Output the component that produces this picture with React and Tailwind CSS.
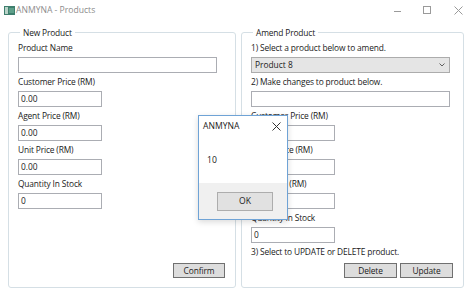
// App.jsx
const font = "font-['Segoe_UI','Open_Sans',sans-serif]";

function Label({ children }) {
  return (
    <div className="h-[18px] leading-[18px] text-[8.4px] tracking-[-0.15px] text-[#1a1a1a] whitespace-nowrap">
      {children}
    </div>
  );
}

function TextBox({ value = "", wide }) {
  return (
    <div
      className={`h-[16px] ${wide ? "w-[199px]" : "w-[84px]"} border border-[#abadb3] bg-white px-[2px] text-[8.4px] leading-[14px] text-[#1a1a1a]`}
    >
      {value}
    </div>
  );
}

function Button({ children, w = "w-[53px]" }) {
  return (
    <button className={`${w} h-[15px] border border-[#707070] bg-[#dddddd] text-[8.4px] tracking-[-0.1px] leading-[13px] text-[#1a1a1a]`}>
      {children}
    </button>
  );
}

function GroupBox({ title, width, children }) {
  return (
    <fieldset className={`${width} h-[262px] flex flex-col border border-[#d5dfe5] rounded-[3px] pl-[9px] pr-[10px] pb-[9px]`}>
      <legend className="ml-[2px] px-[3px] text-[8.4px] tracking-[-0.15px] leading-[13px] text-[#1a1a1a]">{title}</legend>
      {children}
    </fieldset>
  );
}

export default function App() {
  return (
    <div className={`w-[474px] h-[295px] bg-white relative overflow-hidden ${font}`}>
      {/* title bar */}
      <div className="h-[20px] flex items-center">
        <svg width="11" height="9" viewBox="0 0 11 9" className="ml-[4px] mr-[1px]">
          <rect x="0" y="0" width="11" height="9" fill="#3f7f6e" />
          <rect x="1" y="1" width="3" height="7" fill="#b9d3c8" />
          <rect x="5" y="2" width="5" height="5" fill="#5ea08a" />
        </svg>
        <span className="text-[8.6px] text-[#8c8c8c]">ANMYNA - Products</span>
        <div className="ml-auto flex items-center h-full">
          <div className="w-[30px] flex justify-center">
            <div className="w-[7px] h-px bg-[#9a9a9a] mt-[2px]" />
          </div>
          <div className="w-[30px] flex justify-center">
            <div className="w-[8px] h-[8px] border border-[#9a9a9a]" />
          </div>
          <div className="w-[32px] flex justify-center">
            <svg width="9" height="9" viewBox="0 0 9 9">
              <path d="M0.5 0.5L8.5 8.5M8.5 0.5L0.5 8.5" stroke="#9a9a9a" strokeWidth="1" />
            </svg>
          </div>
        </div>
      </div>

      {/* groups */}
      <div className="flex gap-[5px] pl-[8px] mt-[6px]">
        <GroupBox title="New Product" width="w-[228px]">
          <Label>Product Name</Label>
          <TextBox wide />
          <Label>Customer Price (RM)</Label>
          <TextBox value="0.00" />
          <Label>Agent Price (RM)</Label>
          <TextBox value="0.00" />
          <Label>Unit Price (RM)</Label>
          <TextBox value="0.00" />
          <Label>Quantity In Stock</Label>
          <TextBox value="0" />
          <div className="flex-1" />
          <div className="flex justify-end">
            <Button w="w-[52px]">Confirm</Button>
          </div>
        </GroupBox>

        <GroupBox title="Amend Product" width="w-[223px]">
          <Label>1) Select a product below to amend.</Label>
          <div className="h-[16px] w-[199px] border border-[#acacac] bg-[#e5e5e5] flex items-center pl-[3px] pr-[4px] text-[8.4px] text-[#1a1a1a]">
            <span>Product 8</span>
            <svg width="6" height="4" viewBox="0 0 6 4" className="ml-auto">
              <path d="M0.5 0.5L3 3L5.5 0.5" fill="none" stroke="#606060" strokeWidth="1" />
            </svg>
          </div>
          <Label>2) Make changes to product below.</Label>
          <TextBox wide />
          <Label>Customer Price (RM)</Label>
          <TextBox />
          <Label>Agent Price (RM)</Label>
          <TextBox />
          <Label>Unit Price (RM)</Label>
          <TextBox />
          <Label>Quantity In Stock</Label>
          <TextBox value="0" />
          <Label>3) Select to UPDATE or DELETE product.</Label>
          <div className="flex-1" />
          <div className="flex justify-end gap-[3px]">
            <Button>Delete</Button>
            <Button>Update</Button>
          </div>
        </GroupBox>
      </div>

      {/* message box */}
      <div className="absolute left-[198px] top-[115px] w-[90px] h-[105px] border border-[#6fa3d6] bg-white flex flex-col shadow-[0_2px_6px_rgba(0,0,0,0.15)]">
        <div className="h-[20px] flex items-center pl-[4px] pr-[6px] text-[8.6px] text-[#1a1a1a]">
          <span>ANMYNA</span>
          <svg width="9" height="9" viewBox="0 0 9 9" className="ml-auto">
            <path d="M0.5 0.5L8.5 8.5M8.5 0.5L0.5 8.5" stroke="#333" strokeWidth="1" />
          </svg>
        </div>
        <div className="flex-1 pl-[8px] pt-[18px] text-[8.6px] text-[#1a1a1a]">10</div>
        <div className="h-[36px] bg-[#f0f0f0] flex items-center pl-[18px]">
          <button className="w-[56px] h-[19px] border border-[#adadad] bg-[#e1e1e1] text-[8.6px] text-[#1a1a1a]">OK</button>
        </div>
      </div>
    </div>
  );
}
